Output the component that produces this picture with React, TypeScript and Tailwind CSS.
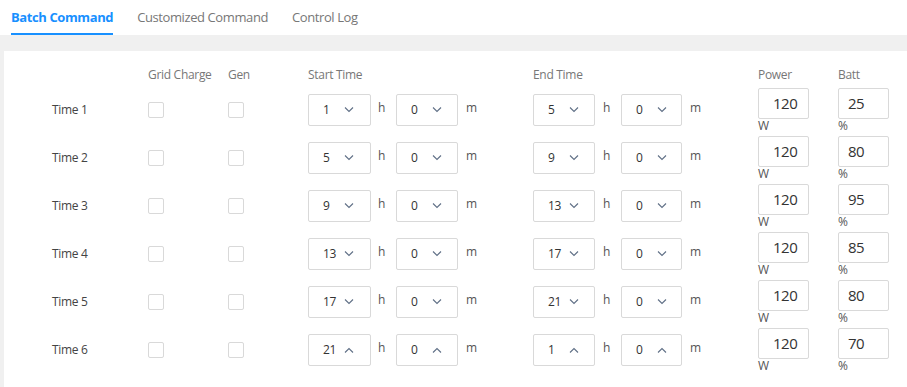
import React from "react";

type Row = {
	name: string;
	sh: number;
	sm: number;
	eh: number;
	em: number;
	power: number;
	batt: number;
	open?: boolean;
};

const rows: Row[] = [
	{ name: "Time 1", sh: 1, sm: 0, eh: 5, em: 0, power: 120, batt: 25 },
	{ name: "Time 2", sh: 5, sm: 0, eh: 9, em: 0, power: 120, batt: 80 },
	{ name: "Time 3", sh: 9, sm: 0, eh: 13, em: 0, power: 120, batt: 95 },
	{ name: "Time 4", sh: 13, sm: 0, eh: 17, em: 0, power: 120, batt: 85 },
	{ name: "Time 5", sh: 17, sm: 0, eh: 21, em: 0, power: 120, batt: 80 },
	{ name: "Time 6", sh: 21, sm: 0, eh: 1, em: 0, power: 120, batt: 70, open: true },
];

const cols = "grid grid-cols-[96px_80px_80px_225px_225px_80px_60px]";

function Chevron({ up }: { up?: boolean }) {
	return (
		<svg width="10" height="6" viewBox="0 0 10 6" fill="none" className="shrink-0">
			<path
				d={up ? "M1 5.5L5 1.5L9 5.5" : "M1 0.5L5 4.5L9 0.5"}
				stroke="#5f6f86"
				strokeWidth="1.1"
			/>
		</svg>
	);
}

function Select({ value, width, up }: { value: number; width: string; up?: boolean }) {
	return (
		<div
			className={`${width} h-[32px] flex items-center pl-[14px] border border-[#d9d9d9] rounded-[2px] bg-white text-[12px] text-[#333]`}
		>
			<span className="w-[21px]">{value}</span>
			<Chevron up={up} />
		</div>
	);
}

function Checkbox() {
	return <div className="w-[16px] h-[16px] border border-[#d9d9d9] rounded-[2px] bg-white" />;
}

function NumBox({ value, unit, pad }: { value: number; unit: string; pad: string }) {
	return (
		<div className="flex flex-col">
			<div
				className={`w-[51px] h-[31px] flex items-center ${pad} border border-[#d9d9d9] rounded-[2px] text-[15px] tracking-[-0.5px] text-[#333]`}
			>
				{value}
			</div>
			<span className="text-[12px] leading-[13px] text-[#555]">{unit}</span>
		</div>
	);
}

export default function App() {
	return (
		<div
			className="w-[907px] h-[387px] bg-[#f0f0f0] flex flex-col overflow-hidden tracking-[-0.3px]"
			style={{ fontFamily: '"Open Sans", "Noto Sans", sans-serif' }}
		>
			<div className="h-[35px] bg-white flex items-end pl-[11px] gap-6 text-[13px] tracking-[-0.4px]">
				<div className="h-[35px] flex items-center border-b-2 border-[#1890ff] font-bold text-[#1890ff] pt-[2px]">
					Batch Command
				</div>
				<div className="h-[35px] flex items-center text-[#777]">Customized Command</div>
				<div className="h-[35px] flex items-center text-[#777]">Control Log</div>
			</div>
			<div className="h-[16px]" />
			<div className="flex-1 ml-[4px] bg-white pt-[12px] pl-[48px]">
				<div className={`${cols} h-[23px] items-center text-[12px] text-[#777]`}>
					<span />
					<span>Grid Charge</span>
					<span>Gen</span>
					<span>Start Time</span>
					<span>End Time</span>
					<span>Power</span>
					<span>Batt</span>
				</div>
				{rows.map((r) => (
					<div key={r.name} className={`${cols} h-[48px] items-center text-[12px] text-[#444]`}>
						<span>{r.name}</span>
						<Checkbox />
						<Checkbox />
						<div className="flex items-center">
							<Select value={r.sh} width="w-[63px]" up={r.open} />
							<span className="w-[25px] pl-[7px] -mt-[4px] text-[#555]">h</span>
							<Select value={r.sm} width="w-[62px]" up={r.open} />
							<span className="pl-[8px] -mt-[4px] text-[#555]">m</span>
						</div>
						<div className="flex items-center">
							<Select value={r.eh} width="w-[62px]" up={r.open} />
							<span className="w-[26px] pl-[8px] -mt-[4px] text-[#555]">h</span>
							<Select value={r.em} width="w-[61px]" up={r.open} />
							<span className="pl-[8px] -mt-[4px] text-[#555]">m</span>
						</div>
						<NumBox value={r.power} unit="W" pad="pl-[14px]" />
						<NumBox value={r.batt} unit="%" pad="pl-[9px]" />
					</div>
				))}
			</div>
		</div>
	);
}
